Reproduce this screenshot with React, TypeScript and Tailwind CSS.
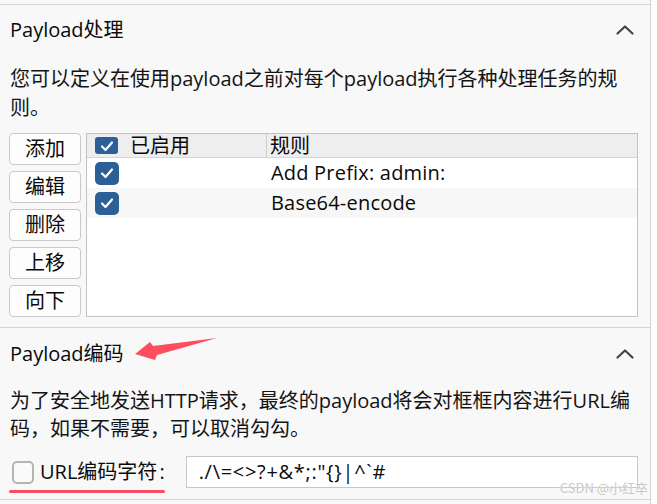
import { ChevronUp } from "lucide-react";

const font = { fontFamily: '"Open Sans", "Noto Sans CJK SC", sans-serif' };

function Check({ header = false }: { header?: boolean }) {
  return (
    <span
      className={
        header
          ? "flex h-[17px] w-[23px] items-center justify-center rounded-[3px] bg-[#2b5f96]"
          : "flex h-[23px] w-[24px] items-center justify-center rounded-[5px] bg-[#2b5f96]"
      }
    >
      <svg width="14" height="12" viewBox="0 0 14 12" fill="none">
        <path d="M2 6.5 L5.5 10 L12 2.5" stroke="white" strokeWidth="2.2" strokeLinecap="round" strokeLinejoin="round" />
      </svg>
    </span>
  );
}

function SideButton({ label }: { label: string }) {
  return (
    <button className="flex h-[32px] w-[72px] items-center justify-center rounded-[4px] border border-[#c9c9c9] bg-[#fdfdfd] text-[20px] text-[#0a0a0a]">
      {label}
    </button>
  );
}

function Chevron() {
  return (
    <svg width="18" height="12" viewBox="0 0 18 12" fill="none">
      <path d="M1.5 9.5 L9 2.5 L16.5 9.5" stroke="#444" strokeWidth="2.2" strokeLinecap="round" strokeLinejoin="round" />
    </svg>
  );
}

export default function App() {
  const rules = ["Add Prefix: admin:", "Base64-encode"];

  return (
    <div className="relative flex h-[504px] w-[657px] overflow-hidden bg-[#f8f8f8] text-[#0a0a0a]" style={font}>
      <div className="flex w-[651px] flex-col border-r border-[#d2d2d2] pt-[4px]">
        {/* Payload processing */}
        <section className="border-t border-[#d4d4d4]">
          <div className="flex h-[50px] items-center justify-between pl-[10px] pr-[16px]">
            <h2 className="text-[20px] leading-none">Payload处理</h2>
            <Chevron />
          </div>
          <p className="mt-[9px] pl-[10px] pr-[12px] text-[20px] leading-[29px] text-[#141414]">
            您可以定义在使用payload之前对每个payload执行各种处理任务的规则。
          </p>
          <div className="mt-[11px] flex gap-[5px] pl-[9px] pr-[12px]">
            <div className="flex flex-col gap-[6px]">
              {["添加", "编辑", "删除", "上移", "向下"].map((b) => (
                <SideButton key={b} label={b} />
              ))}
            </div>
            <div className="flex h-[184px] flex-1 flex-col border border-[#c2c2c2] bg-white">
              <div className="flex h-[24px] items-center border-b border-[#d6d6d6] bg-[#eeeeee] text-[20px]">
                <div className="flex h-full w-[180px] items-center border-r border-[#d0d0d0] pl-[8px]">
                  <Check header />
                  <span className="ml-[12px]">已启用</span>
                </div>
                <span className="pl-[3px]">规则</span>
              </div>
              {rules.map((r, i) => (
                <div
                  key={r}
                  className={
                    i % 2 === 0
                      ? "flex h-[30px] items-center bg-white text-[20px]"
                      : "flex h-[30px] items-center bg-[#f7f7f7] text-[20px]"
                  }
                >
                  <div className="flex w-[181px] items-center pl-[8px]">
                    <Check />
                  </div>
                  <span className="pl-[3px] tracking-[0.2px]">{r}</span>
                </div>
              ))}
            </div>
          </div>
        </section>

        {/* Payload encoding */}
        <section className="mt-[10px] border-t border-[#d4d4d4]">
          <div className="relative flex h-[52px] items-center justify-between pl-[10px] pr-[16px]">
            <h2 className="text-[20px] leading-none">Payload编码</h2>
            <Chevron />
            <svg className="absolute left-[130px] top-[6px]" width="92" height="30" viewBox="0 0 92 30">
              <polygon points="5,20 20,8 23,12 87,4 27,21 25,26" fill="#fe4d5f" />
            </svg>
          </div>
          <p className="mt-[7px] pl-[10px] pr-[12px] text-[20px] leading-[28px] text-[#141414]">
            为了安全地发送HTTP请求，最终的payload将会对框框内容进行URL编码，如果不需要，可以取消勾勾。
          </p>
          <div className="mt-[13px] flex h-[32px] items-center pl-[12px] pr-[12px]">
            <span className="h-[23px] w-[22px] rounded-[5px] border-2 border-[#b4b4b4] bg-[#fafafa]" />
            <span className="ml-[6px] text-[20px]">URL编码字符<span className="ml-[2px]">:</span></span>
            <div className="ml-[21px] flex h-[32px] flex-1 items-center border border-[#c6c6c6] bg-white pl-[12px] text-[20px] tracking-[0.7px]">
              ./\=&lt;&gt;?+&amp;*;:"{"{"}{"}"}|^`#
            </div>
          </div>
          <div className="ml-[9px] mt-[2px] h-[3px] w-[156px] rounded-full bg-[#fb4b63]" />
          <div className="mt-[6px] border-t border-[#d4d4d4]" />
        </section>
      </div>
      <div className="flex-1 bg-[#fdfdfd]" />

      <span
        className="absolute bottom-[7px] right-[9px] text-[13px] text-[#c8c8c8]"
        style={{ fontFamily: '"Noto Sans CJK SC", sans-serif', textShadow: "0 0 2px #fff" }}
      >
        CSDN @小红卒
      </span>
    </div>
  );
}
